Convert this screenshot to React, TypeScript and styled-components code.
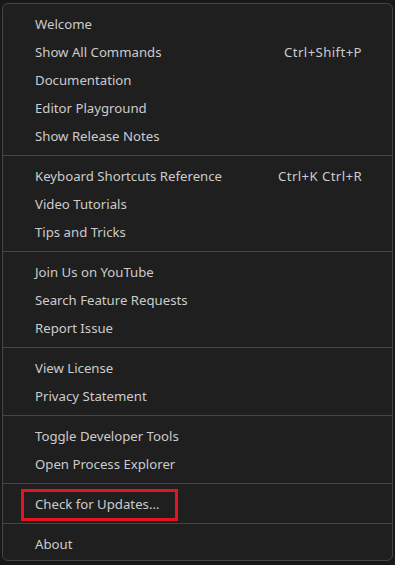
import React from "react";
import styled, { createGlobalStyle } from "styled-components";

const Global = createGlobalStyle`
  html, body { margin: 0; padding: 0; background: #181818; }
  body { font-family: "Noto Sans", "Open Sans", sans-serif; overflow: hidden; }
`;

const Page = styled.div`
  width: 395px;
  height: 565px;
  padding: 3px 0 0 2px;
  box-sizing: border-box;
  position: relative;
`;

const Menu = styled.div`
  width: 391px;
  box-sizing: border-box;
  background: #1f1f1f;
  border: 1px solid #454545;
  border-radius: 6px;
  padding: 6px 0 2px;
  display: flex;
  flex-direction: column;
  position: relative;
`;

const Item = styled.div`
  height: 28px;
  display: flex;
  align-items: center;
  justify-content: space-between;
  padding: 0 30px 0 32px;
  color: #cccccc;
  font-family: "Noto Sans", "Open Sans", sans-serif;
  font-size: 13.2px;
  white-space: nowrap;
`;

const Label = styled.span``;

const Shortcut = styled.span`
  color: #cccccc;
  letter-spacing: 0.4px;
`;

const Separator = styled.div`
  height: 1px;
  margin: 5px 0 6px;
  background: #454545;
`;

const Highlight = styled.div`
  position: absolute;
  left: 18px;
  top: 485px;
  width: 157px;
  height: 32px;
  box-sizing: border-box;
  border: 3px solid #e3141f;
  pointer-events: none;
`;

type Entry = { label: string; shortcut?: string } | "sep";

const entries: Entry[] = [
  { label: "Welcome" },
  { label: "Show All Commands", shortcut: "Ctrl+Shift+P" },
  { label: "Documentation" },
  { label: "Editor Playground" },
  { label: "Show Release Notes" },
  "sep",
  { label: "Keyboard Shortcuts Reference", shortcut: "Ctrl+K Ctrl+R" },
  { label: "Video Tutorials" },
  { label: "Tips and Tricks" },
  "sep",
  { label: "Join Us on YouTube" },
  { label: "Search Feature Requests" },
  { label: "Report Issue" },
  "sep",
  { label: "View License" },
  { label: "Privacy Statement" },
  "sep",
  { label: "Toggle Developer Tools" },
  { label: "Open Process Explorer" },
  "sep",
  { label: "Check for Updates..." },
  "sep",
  { label: "About" },
];

export default function App() {
  return (
    <>
      <Global />
      <Page>
        <Menu>
          {entries.map((e, i) =>
            e === "sep" ? (
              <Separator key={i} />
            ) : (
              <Item key={i}>
                <Label>{e.label}</Label>
                {e.shortcut && <Shortcut>{e.shortcut}</Shortcut>}
              </Item>
            )
          )}
          <Highlight />
        </Menu>
      </Page>
    </>
  );
}
